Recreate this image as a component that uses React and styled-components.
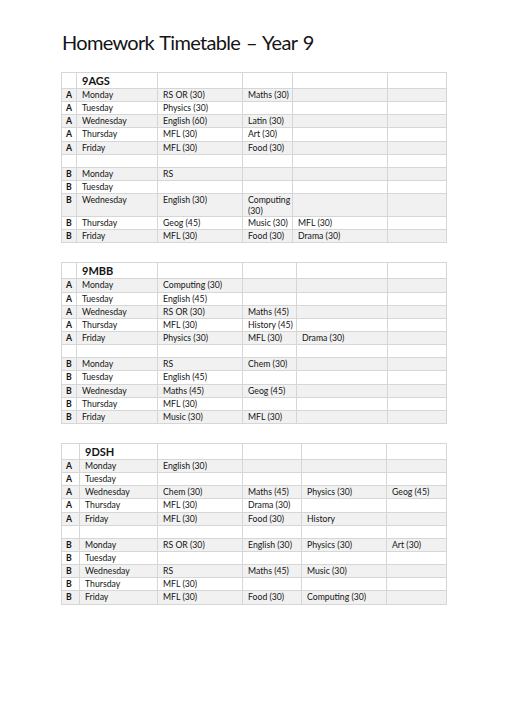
import React from 'react';
import styled, {createGlobalStyle} from 'styled-components';

const GlobalStyle = createGlobalStyle`
  html, body {
    margin: 0;
    padding: 0;
    background: #fff;
  }
  body {
    font-family: Lato, "Open Sans", "Liberation Sans", sans-serif;
    color: #141414;
  }
`;

const Page = styled.div`
  display: flex;
  flex-direction: column;
  gap: 19px;
  padding: 30px 0 0 61px;
  width: 385px;
`;

const Title = styled.h1`
  font-size: 20px;
  font-weight: 400;
  letter-spacing: -0.7px;
  word-spacing: 1.5px;
  line-height: 24px;
  margin: 0 0 -1px 1px;
  white-space: nowrap;
`;

const Table = styled.table`
  border-collapse: collapse;
  table-layout: fixed;
  width: 385px;
  font-size: 8.7px;
`;

const Row = styled.tr`
  background: ${({striped}) => (striped ? '#f1f1f1' : '#fff')};
  height: ${({tall}) => (tall ? '23px' : '13.15px')};
`;

const HeadRow = styled.tr`
  height: 16px;
  background: #fff;
`;

const Cell = styled.td`
  border: 1px solid #d6d6d6;
  padding: 0 2px 0 5px;
  line-height: 11px;
  vertical-align: top;
  overflow: hidden;
`;

const WeekCell = styled(Cell)`
  font-weight: 700;
  padding: 0 0 0 4px;
`;

const GroupName = styled(Cell)`
  font-weight: 700;
  font-size: 11px;
  line-height: 15px;
  vertical-align: middle;
`;

const tables = [
  {
    name: '9AGS',
    widths: [15, 81, 85, 50, 95, 59],
    rows: [
      ['A', 'Monday', 'RS OR (30)', 'Maths (30)'],
      ['A', 'Tuesday', 'Physics (30)'],
      ['A', 'Wednesday', 'English (60)', 'Latin (30)'],
      ['A', 'Thursday', 'MFL (30)', 'Art (30)'],
      ['A', 'Friday', 'MFL (30)', 'Food (30)'],
      [],
      ['B', 'Monday', 'RS'],
      ['B', 'Tuesday'],
      ['B', 'Wednesday', 'English (30)', 'Computing (30)'],
      ['B', 'Thursday', 'Geog (45)', 'Music (30)', 'MFL (30)'],
      ['B', 'Friday', 'MFL (30)', 'Food (30)', 'Drama (30)']
    ],
    tall: [8]
  },
  {
    name: '9MBB',
    widths: [15, 81, 85, 54, 91, 59],
    rows: [
      ['A', 'Monday', 'Computing (30)'],
      ['A', 'Tuesday', 'English (45)'],
      ['A', 'Wednesday', 'RS OR (30)', 'Maths (45)'],
      ['A', 'Thursday', 'MFL (30)', 'History (45)'],
      ['A', 'Friday', 'Physics (30)', 'MFL (30)', 'Drama (30)'],
      [],
      ['B', 'Monday', 'RS', 'Chem (30)'],
      ['B', 'Tuesday', 'English (45)'],
      ['B', 'Wednesday', 'Maths (45)', 'Geog (45)'],
      ['B', 'Thursday', 'MFL (30)'],
      ['B', 'Friday', 'Music (30)', 'MFL (30)']
    ],
    tall: []
  },
  {
    name: '9DSH',
    widths: [18, 78, 85, 59, 85, 60],
    rows: [
      ['A', 'Monday', 'English (30)'],
      ['A', 'Tuesday'],
      ['A', 'Wednesday', 'Chem (30)', 'Maths (45)', 'Physics (30)', 'Geog (45)'],
      ['A', 'Thursday', 'MFL (30)', 'Drama (30)'],
      ['A', 'Friday', 'MFL (30)', 'Food (30)', 'History'],
      [],
      ['B', 'Monday', 'RS OR (30)', 'English (30)', 'Physics (30)', 'Art (30)'],
      ['B', 'Tuesday'],
      ['B', 'Wednesday', 'RS', 'Maths (45)', 'Music (30)'],
      ['B', 'Thursday', 'MFL (30)'],
      ['B', 'Friday', 'MFL (30)', 'Food (30)', 'Computing (30)']
    ],
    tall: []
  }
];

const GroupTable = ({name, widths, rows, tall}) => (
  <Table>
    <colgroup>
      {widths.map((w, i) => (
        <col key={i} style={{width: w}} />
      ))}
    </colgroup>
    <tbody>
      <HeadRow>
        <Cell />
        <GroupName>{name}</GroupName>
        <Cell />
        <Cell />
        <Cell />
        <Cell />
      </HeadRow>
      {rows.map((row, r) => (
        <Row key={r} striped={r % 2 === 0} tall={tall.includes(r)}>
          {widths.map((_, c) =>
            c === 0 ? (
              <WeekCell key={c}>{row[c] || ''}</WeekCell>
            ) : (
              <Cell key={c}>{row[c] || ''}</Cell>
            )
          )}
        </Row>
      ))}
    </tbody>
  </Table>
);

export default function App() {
  return (
    <>
      <GlobalStyle />
      <Page>
        <Title>Homework Timetable – Year 9</Title>
        {tables.map((t) => (
          <GroupTable key={t.name} {...t} />
        ))}
      </Page>
    </>
  );
}
